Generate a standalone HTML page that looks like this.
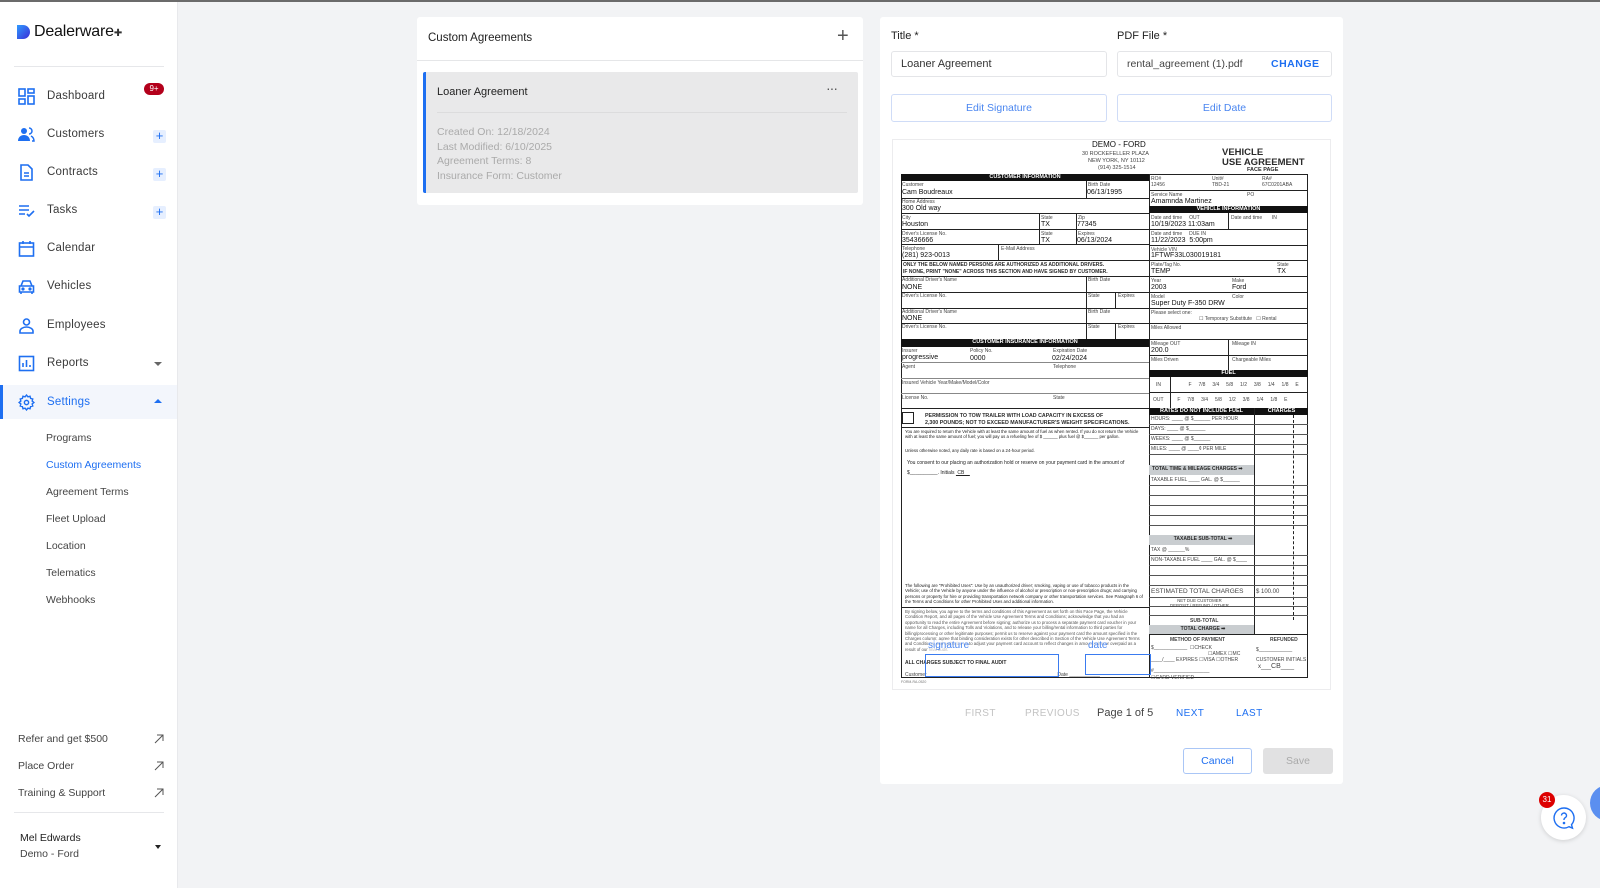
<!DOCTYPE html>
<html><head><meta charset="utf-8"><style>
*{box-sizing:border-box;margin:0;padding:0}
body{width:1600px;height:888px;overflow:hidden;background:#f2f3f5;font-family:"Liberation Sans",Arial,sans-serif;position:relative;color:#2b2b2b}
.a{position:absolute}
.topbar{left:0;top:0;width:1600px;height:2px;background:#6b6b6b}
.side{left:0;top:2px;width:178px;height:886px;background:#fff;border-right:1px solid #e8e9ec}
.nav{position:absolute;left:47px;font-size:11.5px;color:#3a3a3a;letter-spacing:.2px}
.ico{position:absolute;left:18px;width:17px;height:17px}
.plus{position:absolute;left:153px;width:13px;height:13px;background:#e6efff;border-radius:2px;color:#1e6ff1;font-size:13px;line-height:12px;text-align:center}
.sub{position:absolute;left:46px;font-size:10.5px;color:#444}
.card{background:#fff;border-radius:3px}
.h{position:absolute;height:1px;background:#222}
.v{position:absolute;width:1px;background:#222}
.bk{position:absolute;background:#111;color:#fff;font-size:5.5px;font-weight:bold;text-align:center;line-height:7px}
.gr{position:absolute;background:#c9cdd0;font-size:5px;font-weight:bold;line-height:9px;padding-left:3px}
.l{position:absolute;font-size:5px;color:#444;line-height:6px;white-space:nowrap}
.d{position:absolute;font-size:7px;color:#111;line-height:8px;white-space:nowrap}
.p{position:absolute;font-size:4.3px;color:#222;line-height:5.4px}
</style></head><body>
<div class="a topbar"></div>
<div class="a side">
  <svg class="a" style="left:16px;top:22px" width="16" height="16" viewBox="0 0 16 16"><defs><linearGradient id="g" x1="0" y1="0" x2="1" y2="1"><stop offset="0" stop-color="#2f9bff"/><stop offset="1" stop-color="#3b2bd6"/></linearGradient></defs><path d="M1 1h6a7 7 0 0 1 0 14H1z" fill="url(#g)"/></svg>
  <div class="a" style="left:34px;top:21px;font-size:16px;color:#111;letter-spacing:-.2px">Dealerware<span style="font-size:10px;color:#333">✚</span></div>
  <div class="a" style="left:14px;top:64px;width:150px;height:1px;background:#e6e7ea"></div>

  <svg class="ico" style="top:86px" viewBox="0 0 17 17" fill="none" stroke="#1e6ff1" stroke-width="1.6"><rect x="1" y="1" width="6" height="7"/><rect x="10" y="1" width="6" height="4"/><rect x="1" y="11" width="6" height="5"/><rect x="10" y="8" width="6" height="8"/></svg>
  <div class="nav" style="top:88px">Dashboard</div>
  <div class="a" style="left:144px;top:81px;width:20px;height:12px;border-radius:6px;background:#b3001b;color:#fff;font-size:8px;text-align:center;line-height:12px">9+</div>

  <svg class="ico" style="top:124px" viewBox="0 0 17 17" fill="#1e6ff1"><circle cx="6" cy="5" r="3"/><path d="M0 15c0-4 3-6 6-6s6 2 6 6z"/><path d="M11 2a3 3 0 0 1 0 6M13 10c2 1 3 3 3 5h-2" stroke="#1e6ff1" fill="none" stroke-width="1.5"/></svg>
  <div class="nav" style="top:126px">Customers</div><div class="plus" style="top:128px">+</div>

  <svg class="ico" style="top:162px" viewBox="0 0 17 17" fill="none" stroke="#1e6ff1" stroke-width="1.6"><path d="M3 1h7l4 4v11H3z"/><path d="M6 9h5M6 12h5"/></svg>
  <div class="nav" style="top:164px">Contracts</div><div class="plus" style="top:166px">+</div>

  <svg class="ico" style="top:200px" viewBox="0 0 17 17" fill="none" stroke="#1e6ff1" stroke-width="1.6"><path d="M1 4h10M1 8h10M1 12h6M9 12l2 2 5-5"/></svg>
  <div class="nav" style="top:202px">Tasks</div><div class="plus" style="top:204px">+</div>

  <svg class="ico" style="top:238px" viewBox="0 0 17 17" fill="none" stroke="#1e6ff1" stroke-width="1.6"><rect x="1.5" y="3" width="14" height="13"/><path d="M1.5 7h14M5 1v3M12 1v3"/></svg>
  <div class="nav" style="top:240px">Calendar</div>

  <svg class="ico" style="top:277px" viewBox="0 0 17 17" fill="none" stroke="#1e6ff1" stroke-width="1.6"><path d="M3 7l2-5h7l2 5M1.5 7h14v6h-14zM3 13v2M14 13v2"/><circle cx="5" cy="10" r=".8" fill="#1e6ff1"/><circle cx="12" cy="10" r=".8" fill="#1e6ff1"/></svg>
  <div class="nav" style="top:278px">Vehicles</div>

  <svg class="ico" style="top:315px" viewBox="0 0 17 17" fill="none" stroke="#1e6ff1" stroke-width="1.6"><circle cx="8.5" cy="5" r="3"/><path d="M2 16v-2c0-2 3-4 6.5-4s6.5 2 6.5 4v2z"/></svg>
  <div class="nav" style="top:317px">Employees</div>

  <svg class="ico" style="top:353px" viewBox="0 0 17 17" fill="none" stroke="#1e6ff1" stroke-width="1.6"><rect x="1.5" y="1.5" width="14" height="14"/><path d="M5 12V8M8.5 12V5M12 12v-2"/></svg>
  <div class="nav" style="top:355px">Reports</div>
  <div class="a" style="left:154px;top:360px;border:4px solid transparent;border-top:4px solid #666;border-bottom:0"></div>

  <div class="a" style="left:0;top:383px;width:177px;height:34px;background:#f3f6fc;border-left:3px solid #1e6ff1"></div>
  <svg class="ico" style="top:392px" viewBox="0 0 24 24" fill="none" stroke="#1e6ff1" stroke-width="2"><circle cx="12" cy="12" r="3"/><path d="M12 1.5l2 2.5 3-.8.8 3 3 .8-.8 3 2.5 2-2.5 2 .8 3-3 .8-.8 3-3-.8-2 2.5-2-2.5-3 .8-.8-3-3-.8.8-3L1.5 12 4 10l-.8-3 3-.8.8-3 3 .8z"/></svg>
  <div class="nav" style="top:394px;color:#1e6ff1">Settings</div>
  <div class="a" style="left:154px;top:397px;border:4px solid transparent;border-bottom:4px solid #1e6ff1;border-top:0"></div>

  <div class="sub" style="top:430px">Programs</div>
  <div class="sub" style="top:457px;color:#1e6ff1">Custom Agreements</div>
  <div class="sub" style="top:484px">Agreement Terms</div>
  <div class="sub" style="top:511px">Fleet Upload</div>
  <div class="sub" style="top:538px">Location</div>
  <div class="sub" style="top:565px">Telematics</div>
  <div class="sub" style="top:592px">Webhooks</div>

  <div class="sub" style="left:18px;top:731px">Refer and get $500</div>
  <div class="sub" style="left:18px;top:758px">Place Order</div>
  <div class="sub" style="left:18px;top:785px">Training &amp; Support</div>
  <svg class="a" style="left:154px;top:732px" width="10" height="64" viewBox="0 0 10 64" fill="none" stroke="#555" stroke-width="1"><path d="M1 9L9 1M3 1h6v6M1 36L9 28M3 28h6v6M1 63L9 55M3 55h6v6"/></svg>
  <div class="a" style="left:14px;top:810px;width:150px;height:1px;background:#e6e7ea"></div>
  <div class="sub" style="left:20px;top:830px;color:#222">Mel Edwards</div>
  <div class="sub" style="left:20px;top:846px">Demo - Ford</div>
  <div class="a" style="left:155px;top:843px;border:3.5px solid transparent;border-top:4px solid #222;border-bottom:0"></div>
</div>

<!-- left card -->
<div class="a card" style="left:417px;top:17px;width:446px;height:188px"></div>
<div class="a" style="left:428px;top:32px;font-size:11.5px;color:#222">Custom Agreements</div>
<div class="a" style="left:837px;top:25px;font-size:20px;color:#555;font-weight:300">+</div>
<div class="a" style="left:417px;top:60px;width:446px;height:1px;background:#e5e6e8"></div>
<div class="a" style="left:423px;top:72px;width:435px;height:121px;background:#e9e9ea;border-left:3px solid #1e6ff1;border-radius:2px"></div>
<div class="a" style="left:437px;top:86px;font-size:11px;color:#222">Loaner Agreement</div>
<div class="a" style="left:826px;top:83px;font-size:14px;line-height:10px;color:#555;letter-spacing:-1px">···</div>
<div class="a" style="left:437px;top:112px;width:410px;height:1px;background:#dcdcdd"></div>
<div class="a" style="left:437px;top:125px;font-size:10.5px;color:#aaa;line-height:14.7px">Created On: 12/18/2024<br>Last Modified: 6/10/2025<br>Agreement Terms: 8<br>Insurance Form: Customer</div>

<!-- right card -->
<div class="a card" style="left:880px;top:17px;width:463px;height:767px"></div>
<div class="a" style="left:891px;top:30px;font-size:11px;color:#222">Title *</div>
<div class="a" style="left:1117px;top:30px;font-size:11px;color:#222">PDF File *</div>
<div class="a" style="left:891px;top:51px;width:216px;height:26px;border:1px solid #e4e5e8;border-radius:3px;font-size:11px;padding:6px 9px;color:#333">Loaner Agreement</div>
<div class="a" style="left:1117px;top:51px;width:215px;height:26px;border:1px solid #e4e5e8;border-radius:3px;font-size:10.5px;padding:6px 9px;color:#444">rental_agreement (1).pdf</div>
<div class="a" style="left:1271px;top:58px;font-size:10.5px;color:#1e6ff1;font-weight:bold;letter-spacing:.5px">CHANGE</div>
<div class="a" style="left:891px;top:94px;width:216px;height:28px;border:1px solid #cfdcf7;border-radius:3px;font-size:10.5px;color:#4a86f0;text-align:center;line-height:26px">Edit Signature</div>
<div class="a" style="left:1117px;top:94px;width:215px;height:28px;border:1px solid #cfdcf7;border-radius:3px;font-size:10.5px;color:#4a86f0;text-align:center;line-height:26px">Edit Date</div>

<div class="a" style="left:892px;top:139px;width:439px;height:551px;background:#fff;border:1px solid #ececee"></div>

<!-- PDF form -->
<div class="d" style="left:1092px;top:141px;font-size:8px">DEMO - FORD</div>
<div class="l" style="left:1082px;top:151px;font-size:5.5px">30 ROCKEFELLER PLAZA</div>
<div class="l" style="left:1088px;top:158px;font-size:5.5px">NEW YORK, NY 10112</div>
<div class="l" style="left:1098px;top:165px;font-size:5.5px">(914) 325-1514</div>
<div class="a" style="left:1222px;top:148px;font-size:9.5px;font-weight:bold;line-height:10px">VEHICLE</div>
<div class="a" style="left:1222px;top:158px;font-size:9.5px;font-weight:bold;line-height:10px">USE AGREEMENT</div>
<div class="a" style="left:1247px;top:167px;font-size:5.5px;font-weight:bold">FACE PAGE</div>

<div class="a" style="left:901px;top:174px;width:407px;height:504px;border:1px solid #222"></div>
<div class="v" style="left:1149px;top:174px;height:504px"></div>
<div class="bk" style="left:901px;top:174px;width:248px;height:7px">CUSTOMER INFORMATION</div>
<div class="h" style="left:901px;top:198px;width:248px"></div>
<div class="h" style="left:901px;top:213px;width:248px"></div>
<div class="h" style="left:901px;top:229px;width:248px"></div>
<div class="h" style="left:901px;top:244px;width:248px"></div>
<div class="h" style="left:901px;top:260px;width:248px"></div>
<div class="h" style="left:901px;top:276px;width:248px"></div>
<div class="h" style="left:901px;top:292px;width:248px"></div>
<div class="h" style="left:901px;top:308px;width:248px"></div>
<div class="h" style="left:901px;top:323px;width:248px"></div>
<div class="bk" style="left:901px;top:339px;width:248px;height:8px">CUSTOMER INSURANCE INFORMATION</div>
<div class="h" style="left:901px;top:362px;width:248px;background:#888"></div>
<div class="h" style="left:901px;top:378px;width:248px;background:#888"></div>
<div class="h" style="left:901px;top:393px;width:248px;background:#888"></div>
<div class="h" style="left:901px;top:408px;width:248px"></div>
<div class="v" style="left:1086px;top:181px;height:17px"></div>
<div class="v" style="left:1039px;top:213px;height:31px"></div>
<div class="v" style="left:1076px;top:213px;height:31px"></div>
<div class="v" style="left:998px;top:244px;height:16px"></div>
<div class="v" style="left:1086px;top:276px;height:63px"></div>
<div class="v" style="left:1115px;top:292px;height:16px"></div>
<div class="v" style="left:1115px;top:323px;height:16px"></div>

<div class="l" style="left:902px;top:182px">Customer</div><div class="d" style="left:902px;top:189px">Cam Boudreaux</div>
<div class="l" style="left:1088px;top:182px">Birth Date</div><div class="d" style="left:1087px;top:189px">06/13/1995</div>
<div class="l" style="left:902px;top:199px">Home Address</div><div class="d" style="left:902px;top:205px">300 Old way</div>
<div class="l" style="left:902px;top:215px">City</div><div class="d" style="left:902px;top:221px">Houston</div>
<div class="l" style="left:1041px;top:215px">State</div><div class="d" style="left:1041px;top:221px">TX</div>
<div class="l" style="left:1078px;top:215px">Zip</div><div class="d" style="left:1077px;top:221px">77345</div>
<div class="l" style="left:902px;top:231px">Driver's License No.</div><div class="d" style="left:902px;top:237px">35436666</div>
<div class="l" style="left:1041px;top:231px">State</div><div class="d" style="left:1041px;top:237px">TX</div>
<div class="l" style="left:1078px;top:231px">Expires</div><div class="d" style="left:1077px;top:237px">06/13/2024</div>
<div class="l" style="left:902px;top:246px">Telephone</div><div class="d" style="left:902px;top:252px">(281) 923-0013</div>
<div class="l" style="left:1001px;top:246px">E-Mail Address</div>
<div class="a" style="left:903px;top:262px;font-size:5px;font-weight:bold;line-height:6.5px">ONLY THE BELOW NAMED PERSONS ARE AUTHORIZED AS ADDITIONAL DRIVERS.<br>IF NONE, PRINT "NONE" ACROSS THIS SECTION AND HAVE SIGNED BY CUSTOMER.</div>
<div class="l" style="left:902px;top:277px">Additional Driver's Name</div><div class="d" style="left:902px;top:284px">NONE</div>
<div class="l" style="left:1088px;top:277px">Birth Date</div>
<div class="l" style="left:902px;top:293px">Driver's License No.</div><div class="l" style="left:1088px;top:293px">State</div><div class="l" style="left:1118px;top:293px">Expires</div>
<div class="l" style="left:902px;top:309px">Additional Driver's Name</div><div class="d" style="left:902px;top:315px">NONE</div>
<div class="l" style="left:1088px;top:309px">Birth Date</div>
<div class="l" style="left:902px;top:324px">Driver's License No.</div><div class="l" style="left:1088px;top:324px">State</div><div class="l" style="left:1118px;top:324px">Expires</div>
<div class="l" style="left:902px;top:348px">Insurer</div><div class="d" style="left:902px;top:354px">progressive</div>
<div class="l" style="left:970px;top:348px">Policy No.</div><div class="d" style="left:970px;top:355px">0000</div>
<div class="l" style="left:1053px;top:348px">Expiration Date</div><div class="d" style="left:1052px;top:355px">02/24/2024</div>
<div class="l" style="left:902px;top:364px">Agent</div><div class="l" style="left:1053px;top:364px">Telephone</div>
<div class="l" style="left:902px;top:380px">Insured Vehicle Year/Make/Model/Color</div>
<div class="l" style="left:902px;top:395px">License No.</div><div class="l" style="left:1053px;top:395px">State</div>

<div class="a" style="left:902px;top:412px;width:12px;height:12px;border:1px solid #222"></div>
<div class="a" style="left:925px;top:413px;font-size:5.3px;font-weight:bold;line-height:7px">PERMISSION TO TOW TRAILER WITH LOAD CAPACITY IN EXCESS OF<br>2,300 POUNDS; NOT TO EXCEED MANUFACTURER'S WEIGHT SPECIFICATIONS.</div>
<div class="h" style="left:901px;top:427px;width:248px"></div>
<div class="p" style="left:905px;top:429px;width:240px">You are required to return the Vehicle with at least the same amount of fuel as when rented. If you do not return the Vehicle with at least the same amount of fuel; you will pay us a refueling fee of $ ______ plus fuel @ $______ per gallon.</div>
<div class="p" style="left:905px;top:448px">Unless otherwise noted, any daily rate is based on a 24-hour period.</div>
<div class="p" style="left:907px;top:458px;width:238px;font-size:5px;line-height:10px">You consent to our placing an authorization hold or reserve on your payment card in the amount of $__________. Initials <u>&nbsp;CB&nbsp;&nbsp;&nbsp;&nbsp;</u></div>
<div class="p" style="left:905px;top:583px;width:240px">The following are "Prohibited Uses": Use by an unauthorized driver; smoking, vaping or use of tobacco products in the Vehicle; use of the Vehicle by anyone under the influence of alcohol or prescription or non-prescription drugs; and carrying persons or property for hire or providing transportation network company or other transportation services. See Paragraph 6 of the Terms and Conditions for other Prohibited Uses and additional information.</div>
<div class="h" style="left:901px;top:607px;width:248px"></div>
<div class="p" style="left:905px;top:609px;width:240px;color:#555">By signing below, you agree to the terms and conditions of this Agreement as set forth on this Face Page, the Vehicle Condition Report, and all pages of the Vehicle Use Agreement Terms and Conditions; acknowledge that you had an opportunity to read the entire Agreement before signing; authorize us to process a separate payment card voucher in your name for all Charges, including Tolls and Violations, and to release your billing/rental information to third parties for billing/processing or other legitimate purposes; permit us to reserve against your payment card the amount specified in the Charges column; agree that binding consideration exists for other described in Section of the Vehicle Use Agreement Terms and Conditions; and authorize us to adjust your payment card account to reflect changes in amounts due or overpaid as a result of our final audit.</div>
<div class="a" style="left:905px;top:660px;font-size:5px;font-weight:bold">ALL CHARGES SUBJECT TO FINAL AUDIT</div>
<div class="l" style="left:905px;top:672px">Customer ______________________________________________ Date ___________</div>
<div class="a" style="left:928px;top:640px;font-size:10px;line-height:11px;color:#4a86f0;background:rgba(255,255,255,.6)">signature</div>
<div class="a" style="left:925px;top:654px;width:134px;height:23px;border:1px solid #3a7bf0"></div>
<div class="a" style="left:1088px;top:640px;font-size:10px;line-height:11px;color:#4a86f0;background:rgba(255,255,255,.6)">date</div>
<div class="a" style="left:1085px;top:654px;width:66px;height:21px;border:1px solid #3a7bf0"></div>
<div class="l" style="left:901px;top:679px;font-size:3.5px;color:#777">FORM-RA-0520</div>

<!-- right col -->
<div class="l" style="left:1151px;top:176px">RO#<br>12456</div>
<div class="l" style="left:1212px;top:176px">Unit#<br>TBD-21</div>
<div class="l" style="left:1262px;top:176px">RA#<br>67C0201ABA</div>
<div class="h" style="left:1149px;top:190px;width:159px"></div>
<div class="l" style="left:1151px;top:192px">Service Name</div><div class="l" style="left:1247px;top:192px">PO</div>
<div class="d" style="left:1151px;top:198px">Amamnda Martinez</div>
<div class="bk" style="left:1149px;top:206px;width:159px;height:7px">VEHICLE INFORMATION</div>
<div class="h" style="left:1149px;top:229px;width:159px"></div>
<div class="h" style="left:1149px;top:245px;width:159px"></div>
<div class="h" style="left:1149px;top:260px;width:159px"></div>
<div class="h" style="left:1149px;top:276px;width:159px"></div>
<div class="h" style="left:1149px;top:292px;width:159px"></div>
<div class="h" style="left:1149px;top:308px;width:159px"></div>
<div class="h" style="left:1149px;top:323px;width:159px"></div>
<div class="h" style="left:1149px;top:339px;width:159px"></div>
<div class="h" style="left:1149px;top:355px;width:159px"></div>
<div class="v" style="left:1228px;top:213px;height:16px"></div>
<div class="v" style="left:1228px;top:339px;height:31px"></div>
<div class="l" style="left:1151px;top:215px">Date and time&nbsp;&nbsp;&nbsp;&nbsp;&nbsp;OUT</div><div class="d" style="left:1151px;top:221px">10/19/2023 11:03am</div>
<div class="l" style="left:1231px;top:215px">Date and time&nbsp;&nbsp;&nbsp;&nbsp;&nbsp;&nbsp;&nbsp;IN</div>
<div class="l" style="left:1151px;top:231px">Date and time&nbsp;&nbsp;&nbsp;&nbsp;&nbsp;DUE IN</div><div class="d" style="left:1151px;top:237px">11/22/2023&nbsp; 5:00pm</div>
<div class="l" style="left:1151px;top:247px">Vehicle VIN</div><div class="d" style="left:1151px;top:252px">1FTWF33L030019181</div>
<div class="l" style="left:1151px;top:262px">Plate/Tag No.</div><div class="l" style="left:1277px;top:262px">State</div>
<div class="d" style="left:1151px;top:268px">TEMP</div><div class="d" style="left:1277px;top:268px">TX</div>
<div class="l" style="left:1151px;top:278px">Year</div><div class="d" style="left:1151px;top:284px">2003</div>
<div class="l" style="left:1232px;top:278px">Make</div><div class="d" style="left:1232px;top:284px">Ford</div>
<div class="l" style="left:1151px;top:294px">Model</div><div class="d" style="left:1151px;top:300px">Super Duty F-350 DRW</div>
<div class="l" style="left:1232px;top:294px">Color</div>
<div class="l" style="left:1151px;top:310px">Please select one:</div>
<div class="l" style="left:1199px;top:316px">☐ Temporary Substitute&nbsp;&nbsp;&nbsp;☐ Rental</div>
<div class="l" style="left:1151px;top:325px">Miles Allowed</div>
<div class="l" style="left:1151px;top:341px">Mileage OUT</div><div class="d" style="left:1151px;top:347px">200.0</div>
<div class="l" style="left:1232px;top:341px">Mileage IN</div>
<div class="l" style="left:1151px;top:357px">Miles Driven</div><div class="l" style="left:1232px;top:357px">Chargeable Miles</div>
<div class="bk" style="left:1149px;top:370px;width:159px;height:7px">FUEL</div>
<div class="h" style="left:1149px;top:392px;width:159px"></div>
<div class="v" style="left:1170px;top:377px;height:31px"></div>
<div class="l" style="left:1156px;top:382px;word-spacing:5.5px">IN&nbsp;&nbsp;&nbsp;&nbsp;F 7/8 3/4 5/8 1/2 3/8 1/4 1/8 E</div>
<div class="l" style="left:1153px;top:397px;word-spacing:5.5px">OUT&nbsp;&nbsp;F 7/8 3/4 5/8 1/2 3/8 1/4 1/8 E</div>
<div class="bk" style="left:1149px;top:408px;width:105px;height:7px">RATES DO NOT INCLUDE FUEL</div>
<div class="bk" style="left:1255px;top:408px;width:53px;height:7px">CHARGES</div>
<div class="v" style="left:1254px;top:408px;height:226px"></div>
<div style="position:absolute;left:1293px;top:415px;height:205px;border-left:1px dashed #222"></div>
<div class="h" style="left:1149px;top:424px;width:159px;background:#555"></div>
<div class="h" style="left:1149px;top:434px;width:159px;background:#555"></div>
<div class="h" style="left:1149px;top:444px;width:159px;background:#555"></div>
<div class="h" style="left:1149px;top:454px;width:159px;background:#555"></div>
<div class="gr" style="left:1149px;top:465px;width:105px;height:10px">TOTAL TIME &amp; MILEAGE CHARGES ➡</div>
<div class="h" style="left:1149px;top:485px;width:159px;background:#555"></div>
<div class="h" style="left:1149px;top:495px;width:159px;background:#555"></div>
<div class="h" style="left:1149px;top:505px;width:159px;background:#555"></div>
<div class="h" style="left:1149px;top:515px;width:159px;background:#555"></div>
<div class="h" style="left:1149px;top:525px;width:159px;background:#555"></div>
<div class="gr" style="left:1149px;top:535px;width:105px;height:10px;text-align:center">TAXABLE SUB-TOTAL ➡</div>
<div class="h" style="left:1149px;top:555px;width:159px;background:#555"></div>
<div class="h" style="left:1149px;top:565px;width:159px;background:#555"></div>
<div class="h" style="left:1149px;top:575px;width:159px;background:#555"></div>
<div class="h" style="left:1149px;top:585px;width:159px;background:#555"></div>
<div class="h" style="left:1149px;top:597px;width:159px;background:#555"></div>
<div class="h" style="left:1149px;top:606px;width:159px;background:#555"></div>
<div class="h" style="left:1149px;top:615px;width:159px;background:#555"></div>
<div class="gr" style="left:1149px;top:625px;width:105px;height:9px;text-align:center">TOTAL CHARGE ➡</div>
<div class="h" style="left:1149px;top:634px;width:159px"></div>
<div class="l" style="left:1151px;top:416px">HOURS: ____ @ $______ PER HOUR</div>
<div class="l" style="left:1151px;top:426px">DAYS: ____ @ $______</div>
<div class="l" style="left:1151px;top:436px">WEEKS: ____ @ $______</div>
<div class="l" style="left:1151px;top:446px">MILES: ____ @ ____¢ PER MILE</div>
<div class="l" style="left:1151px;top:477px">TAXABLE FUEL ____ GAL. @ $______</div>
<div class="l" style="left:1151px;top:547px">TAX @ ______%</div>
<div class="l" style="left:1151px;top:557px">NON-TAXABLE FUEL ____ GAL. @ $____</div>
<div class="l" style="left:1151px;top:589px;font-size:6.5px">ESTIMATED TOTAL CHARGES</div>
<div class="l" style="left:1256px;top:589px;font-size:6px">$ 100.00</div>
<div class="l" style="left:1170px;top:599px;font-size:4.3px;line-height:4.5px;text-align:center">NET DUE CUSTOMER<br>DEPOSIT / REFUND / OTHER</div>
<div class="l" style="left:1190px;top:618px;font-weight:bold">SUB-TOTAL</div>
<div class="l" style="left:1170px;top:637px;font-weight:bold">METHOD OF PAYMENT</div>
<div class="l" style="left:1270px;top:637px;font-weight:bold">REFUNDED</div>
<div class="l" style="left:1151px;top:645px">$____________&nbsp;&nbsp;☐CHECK</div>
<div class="l" style="left:1208px;top:651px">☐AMEX ☐MC</div>
<div class="l" style="left:1151px;top:657px">____/____ EXPIRES ☐VISA ☐OTHER</div>
<div class="l" style="left:1151px;top:668px">#____________________</div>
<div class="l" style="left:1151px;top:675px">☐CARD VERIFIED</div>
<div class="l" style="left:1256px;top:647px">$____________</div>
<div class="l" style="left:1256px;top:657px">CUSTOMER INITIALS</div>
<div class="l" style="left:1258px;top:664px;font-size:6px">x___<span style="font-size:7px">CB</span>____</div>

<!-- pagination -->
<div class="a" style="left:965px;top:708px;font-size:10px;color:#c3c3c3;letter-spacing:.4px">FIRST</div>
<div class="a" style="left:1025px;top:708px;font-size:10px;color:#c3c3c3;letter-spacing:.4px">PREVIOUS</div>
<div class="a" style="left:1097px;top:707px;font-size:11px;color:#444">Page 1 of 5</div>
<div class="a" style="left:1176px;top:708px;font-size:10px;color:#1e6ff1;letter-spacing:.4px">NEXT</div>
<div class="a" style="left:1236px;top:708px;font-size:10px;color:#1e6ff1;letter-spacing:.4px">LAST</div>
<div class="a" style="left:1183px;top:748px;width:69px;height:26px;border:1px solid #aac6f6;border-radius:3px;font-size:10.5px;color:#1e6ff1;text-align:center;line-height:24px">Cancel</div>
<div class="a" style="left:1263px;top:748px;width:70px;height:26px;background:#e1e1e2;border-radius:3px;font-size:10.5px;color:#aaa;text-align:center;line-height:26px">Save</div>

<!-- help -->
<div class="a" style="left:1541px;top:795px;width:45px;height:45px;border-radius:50%;background:#fff;box-shadow:0 1px 5px rgba(0,0,0,.15)"></div>
<svg class="a" style="left:1552px;top:806px" width="24" height="24" viewBox="0 0 24 24" fill="none" stroke="#1e6ff1" stroke-width="1.4"><path d="M12 2a10 10 0 1 0 5 18.7l3.5 1.5-1-3.5A10 10 0 0 0 12 2z"/><path d="M9.5 9.5a2.5 2.5 0 1 1 3.5 2.3c-.7.4-1 .9-1 1.7v.5"/><circle cx="12" cy="17" r=".6" fill="#1e6ff1"/></svg>
<div class="a" style="left:1539px;top:792px;width:16px;height:16px;border-radius:50%;background:#d00;color:#fff;font-size:8px;text-align:center;line-height:16px">31</div>
<div class="a" style="left:1590px;top:785px;width:36px;height:36px;border-radius:50%;background:#5b8ff0"></div>
</body></html>
